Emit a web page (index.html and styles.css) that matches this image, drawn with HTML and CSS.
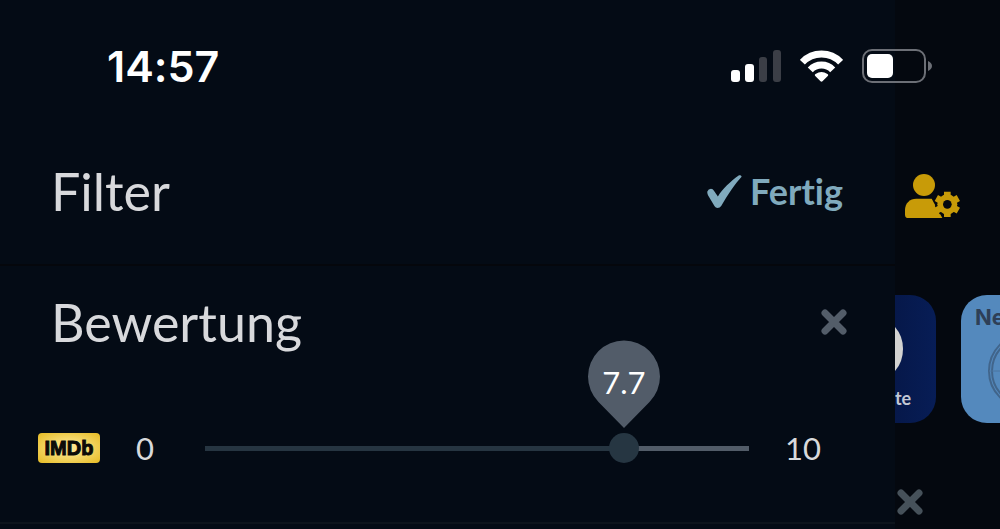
FILE: index.html
```html
<!DOCTYPE html>
<html lang="de">
<head>
<meta charset="utf-8">
<meta name="viewport" content="width=device-width, initial-scale=1">
<title>Filter</title>
<link rel="stylesheet" href="styles.css">
</head>
<body>
<div class="app">
  <div class="drawer">
    <header class="drawer-header">
      <h1 class="title">Filter</h1>
      <button class="done" type="button">
        <svg class="done-icon" viewBox="0 0 106 100" aria-hidden="true"><path d="M1 50Q4 42 12 42Q18 42 21 48L33 65C47 43 71 19 97 1Q103-1 105 5C86 25 62 60 43 94Q39 100 32 100Q26 100 23 95L3 61Q0 55 1 50Z"/></svg>
        <span>Fertig</span>
      </button>
    </header>
    <section class="section">
      <div class="section-head">
        <h2 class="title">Bewertung</h2>
        <button class="clear" type="button" aria-label="Zurücksetzen">
          <svg class="cross" viewBox="0 0 26 26" aria-hidden="true"><path d="M4 4L22 22M22 4L4 22"/></svg>
        </button>
      </div>
      <div class="rating">
        <span class="imdb">IMDb</span>
        <span class="min">0</span>
        <div class="slider">
          <input class="range" type="range" min="0" max="10" step="0.1" value="7.7" aria-label="Bewertung">
          <output class="bubble" style="left: 77%">
            <svg class="pin" viewBox="0 0 72 88" aria-hidden="true"><path d="M36 88L10.500 62A36 36 0 1 1 61.500 62Z"/></svg>
            <span class="bubble-value">7.7</span>
          </output>
        </div>
        <span class="max">10</span>
      </div>
    </section>
  </div>

  <main class="page">
    <div class="page-top">
      <button class="account" type="button" aria-label="Konto">
        <svg class="account-icon" viewBox="0 0 165 132" aria-hidden="true">
          <circle cx="57" cy="33" r="33"/>
          <path d="M0 122V108C0 88 14 74 34 74H80L112 132H10Q0 132 0 122Z"/>
          <g class="gear-gap"><circle cx="127" cy="91" r="29"/><path d="M127 57V125M97 74L157 108M97 108L157 74"/></g>
          <g class="gear"><circle cx="127" cy="91" r="30"/><path d="M127 53V129M94 72L160 110M94 110L160 72"/></g>
          <circle class="gear-hole" cx="127" cy="91" r="13"/>
        </svg>
      </button>
    </div>
    <div class="cards">
      <div class="card card-first">
        <svg class="moon" viewBox="0 0 9 44" aria-hidden="true"><path d="M0 0Q8 9 8 22T0 44Z"/></svg>
        <span class="card-label">te</span>
      </div>
      <div class="card card-second">
        <span class="card-title">Ne</span>
        <svg class="compass" viewBox="0 0 80 80" aria-hidden="true"><circle cx="40" cy="40" r="37"/><circle cx="40" cy="40" r="34"/><path d="M3 40H77M40 3V77M14 14L66 66M14 66L66 14"/></svg>
      </div>
    </div>
    <button class="clear page-clear" type="button" aria-label="Entfernen">
      <svg class="cross" viewBox="0 0 26 26" aria-hidden="true"><path d="M4 4L22 22M22 4L4 22"/></svg>
    </button>
  </main>

  <div class="status">
    <time class="clock">14:57</time>
    <div class="status-icons">
      <svg class="signal" viewBox="0 0 50 33" aria-hidden="true"><rect y="20" width="9" height="12" rx="3"/><rect x="14" y="14" width="9" height="18" rx="3"/><g class="dim"><rect x="28" y="7" width="8" height="25" rx="3"/><rect x="42" width="8" height="32" rx="3"/></g></svg>
      <svg class="wifi" viewBox="0 0 130 97" aria-hidden="true"><path class="arc" d="M7 37A80 80 0 0 1 123 37M31 60A47 47 0 0 1 99 60"/><path d="M62 95L46 79Q43 75 47 73Q65 60 83 73Q87 75 84 79L68 95Q65 98 62 95Z"/></svg>
      <svg class="battery" viewBox="0 0 70 34" aria-hidden="true"><rect class="shell" x="1" y="1" width="62" height="32" rx="9"/><rect x="5" y="5" width="26" height="24" rx="5"/><path class="cap" d="M66 12Q70 14 70 17T66 22Z"/></svg>
    </div>
  </div>
</div>
</body>
</html>
```
FILE: styles.css
```css
* { box-sizing: border-box; }

body {
  margin: 0;
  background: #04080f;
  color: #d8d9dc;
  font-family: Lato, "Open Sans", sans-serif;
  font-variant-ligatures: none;
}

button {
  border: 0;
  padding: 0;
  background: none;
  font: inherit;
  color: inherit;
  cursor: pointer;
}

svg { display: block; }

.app {
  display: grid;
  grid-template-columns: minmax(0, 1fr) 105px;
  grid-template-rows: auto 1fr;
  min-height: 100vh;
  background: linear-gradient(to left, #04080f 105px, #040b15 105px);
}

.status {
  grid-area: 1 / 1 / 2 / 3;
  display: flex;
  align-items: center;
  justify-content: space-between;
  height: 132px;
  padding: 0 68px 0 107px;
  color: #fff;
}

.clock {
  font-family: Inter, sans-serif;
  font-size: 43px;
  font-weight: 600;
}

.status-icons {
  display: flex;
  align-items: center;
  gap: 19px;
  fill: #fff;
}

.signal { width: 50px; height: 33px; }
.dim { fill: #3b3e46; }
.wifi { width: 43px; height: 32px; }
.arc { fill: none; stroke: #fff; stroke-width: 21; }
.battery { width: 70px; height: 34px; }
.shell { fill: none; stroke: #6c6f76; stroke-width: 2; }
.cap { fill: #6c6f76; }

.drawer { grid-area: 2 / 1; }

.drawer-header {
  display: flex;
  align-items: center;
  justify-content: space-between;
  height: 134px;
  padding: 0 52px 14px 51px;
  border-bottom: 2px solid #05070c;
}

.title {
  margin: 0;
  font-size: 52px;
  font-weight: 400;
  line-height: 64px;
}

.done {
  display: flex;
  align-items: center;
  gap: 8px;
  color: #80aabd;
  font-size: 36px;
  font-weight: 700;
  line-height: 44px;
}

.done-icon { width: 35px; height: 33px; fill: currentColor; }

.section {
  padding: 24px 48px 44px 38px;
  border-bottom: 2px solid #0d141c;
}

.section-head {
  display: flex;
  align-items: center;
  justify-content: space-between;
  padding-left: 13px;
}

.clear { color: #535d69; }

.cross {
  width: 26px;
  height: 26px;
  fill: none;
  stroke: currentColor;
  stroke-width: 7;
  stroke-linecap: round;
}

.rating {
  display: flex;
  align-items: center;
  height: 60px;
  margin-top: 64px;
  font-size: 31px;
}

.imdb {
  width: 62px;
  border-radius: 4px;
  background: radial-gradient(ellipse, #fbe58c 20%, #e9c02f 90%);
  color: #0b0b08;
  font-family: "Liberation Sans Narrow", "Liberation Sans", sans-serif;
  font-size: 20px;
  font-weight: 700;
  line-height: 30px;
  text-align: center;
  -webkit-text-stroke: 1px #0b0b08;
}

.min { width: 105px; padding-left: 36px; }
.max { width: 98px; padding-left: 36px; }

.slider {
  position: relative;
  flex: 1;
  min-width: 0;
}

.range {
  display: block;
  width: calc(100% + 30px);
  height: 30px;
  margin: 0 -15px;
  background: linear-gradient(to right, #263541 77%, #525c68 77%) center / calc(100% - 30px) 5px no-repeat;
  appearance: none;
}

.range::-webkit-slider-thumb {
  width: 30px;
  height: 30px;
  border-radius: 50%;
  background: #263642;
  appearance: none;
}

.bubble {
  position: absolute;
  bottom: 35px;
  width: 72px;
  height: 88px;
  transform: translateX(-50%);
  color: #fff;
  text-align: center;
}

.pin { width: 72px; height: 88px; fill: #525c69; }

.bubble-value {
  position: absolute;
  inset: 22px 0 auto;
  line-height: 40px;
}

.page {
  grid-area: 2 / 2;
  overflow: hidden;
}

.page-top { padding: 42px 0 0 10px; }
.account { display: block; }
.account-icon { width: 55px; height: 44px; fill: #c89b08; }
.gear, .gear-gap { stroke-width: 20; }
.gear { stroke: #c89b08; }
.gear circle { stroke: none; }
.gear-gap { fill: #04080f; stroke: #04080f; stroke-width: 30; }
.gear-gap circle { stroke-width: 14; }
.gear-hole { fill: #04080f; }

.cards {
  display: flex;
  gap: 25px;
  margin-top: 77px;
}

.card {
  display: flex;
  flex: none;
  flex-direction: column;
  height: 128px;
  overflow: hidden;
}

.card-first {
  width: 41px;
  justify-content: space-between;
  padding: 32px 0 13px;
  border-radius: 0 26px 26px 0;
  background: linear-gradient(to right, #06184a, #071d56);
}

.moon { width: 9px; height: 44px; fill: #d3d3d1; }
.card-label { color: #c3c8d4; font-size: 18px; font-weight: 700; line-height: 24px; }

.card-second {
  width: 128px;
  padding: 8px 0 0 14px;
  border-radius: 26px;
  background: #5489bd;
}

.card-title {
  color: #2e3f57;
  font-family: Inter, sans-serif;
  font-size: 22px;
  font-weight: 700;
  line-height: 28px;
}

.compass {
  width: 80px;
  height: 80px;
  margin-left: 11px;
  fill: none;
  stroke: #4a74a0;
  stroke-width: 1;
}
.compass circle { stroke: #41658b; stroke-width: 2; }

.page-clear { display: block; margin: 66px 0 0 2px; color: #46515a; }
```
